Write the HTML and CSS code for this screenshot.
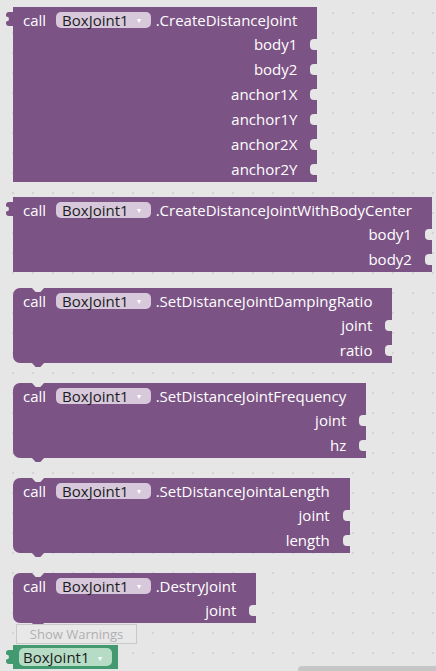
FILE: index.html
```html
<!DOCTYPE html>
<html>
<head>
<meta charset="utf-8">
<link rel="stylesheet" href="styles.css">
</head>
<body>
<div class="ws">
  <div class="blk out b1">
    <div class="hdr"><span class="kw">call</span><span class="pill">BoxJoint1<span class="arr">▾</span></span><span class="meth">.CreateDistanceJoint</span></div>
    <div class="row">body1</div>
    <div class="row">body2</div>
    <div class="row">anchor1X</div>
    <div class="row">anchor1Y</div>
    <div class="row">anchor2X</div>
    <div class="row">anchor2Y</div>
  </div>
  <div class="blk out b2">
    <div class="hdr"><span class="kw">call</span><span class="pill">BoxJoint1<span class="arr">▾</span></span><span class="meth">.CreateDistanceJointWithBodyCenter</span></div>
    <div class="row">body1</div>
    <div class="row">body2</div>
  </div>
  <div class="blk stmt b3">
    <div class="hdr"><span class="kw">call</span><span class="pill">BoxJoint1<span class="arr">▾</span></span><span class="meth">.SetDistanceJointDampingRatio</span></div>
    <div class="row">joint</div>
    <div class="row">ratio</div>
  </div>
  <div class="blk stmt b4">
    <div class="hdr"><span class="kw">call</span><span class="pill">BoxJoint1<span class="arr">▾</span></span><span class="meth">.SetDistanceJointFrequency</span></div>
    <div class="row">joint</div>
    <div class="row">hz</div>
  </div>
  <div class="blk stmt b5">
    <div class="hdr"><span class="kw">call</span><span class="pill">BoxJoint1<span class="arr">▾</span></span><span class="meth">.SetDistanceJointaLength</span></div>
    <div class="row">joint</div>
    <div class="row">length</div>
  </div>
  <div class="blk stmt b6">
    <div class="hdr"><span class="kw">call</span><span class="pill">BoxJoint1<span class="arr">▾</span></span><span class="meth">.DestryJoint</span></div>
    <div class="row">joint</div>
  </div>
  <button class="warn">Show Warnings</button>
  <div class="gblk"><span class="gpill">BoxJoint1<span class="arr">▾</span></span></div>
  <div class="scroll"></div>
</div>
</body>
</html>
```
FILE: styles.css
```css
html, body {
  margin: 0;
  padding: 0;
}
body {
  width: 436px;
  height: 671px;
  overflow: hidden;
  font-family: "Open Sans", "Noto Sans", sans-serif;
}
.ws {
  position: relative;
  width: 436px;
  height: 671px;
  background-color: #e6e6e6;
  background-image: radial-gradient(circle, #d4d4d4 0.8px, transparent 1.2px);
  background-size: 20px 20px;
  background-position: 3px 3px;
  overflow: hidden;
}
.blk {
  position: absolute;
  left: 13px;
  background: #7c5385;
  color: #fff;
  font-size: 15px;
  display: flex;
  flex-direction: column;
  width: max-content;
}
.b1 { top: 7px; }
.b2 { top: 197px; }
.b3 { top: 288px; }
.b4 { top: 383px; }
.b5 { top: 478px; }
.b6 { top: 573px; }
.hdr {
  height: 25px;
  display: flex;
  align-items: center;
  padding: 0 20px 0 10px;
  white-space: nowrap;
}
.kw {
  margin-right: 10px;
}
.pill {
  display: inline-flex;
  align-items: center;
  height: 16px;
  padding: 0 10px 0 6px;
  border-radius: 5px;
  background: #d7c8db;
  color: #1c1c1c;
  margin-right: 5px;
}
.arr {
  font-size: 8px;
  color: #fff;
  margin-left: 8px;
}
.row {
  position: relative;
  height: 25px;
  line-height: 25px;
  text-align: right;
  padding-right: 20px;
}
.row::after {
  content: "";
  position: absolute;
  right: 0;
  top: 7px;
  width: 7px;
  height: 11px;
  background: #e6e6e6;
  border-radius: 4px 0 0 4px;
}
.out::before {
  content: "";
  position: absolute;
  left: -7px;
  top: 5px;
  width: 7px;
  height: 14px;
  background: #7c5385;
  border-radius: 3px 0 0 3px;
  clip-path: polygon(0 0, 100% 0, 100% 100%, 0 100%, 0 70%, 40% 60%, 40% 40%, 0 30%);
}
.stmt {
  border-radius: 7px 0 0 7px;
}
.stmt::before {
  content: "";
  position: absolute;
  left: 19px;
  top: 0;
  width: 12px;
  height: 4px;
  background: #e6e6e6;
  clip-path: polygon(0 0, 100% 0, 70% 100%, 30% 100%);
}
.stmt::after {
  content: "";
  position: absolute;
  left: 19px;
  bottom: -4px;
  width: 12px;
  height: 4px;
  background: #7c5385;
  clip-path: polygon(0 0, 100% 0, 70% 100%, 30% 100%);
}
.warn {
  position: absolute;
  left: 16px;
  top: 624px;
  width: 121px;
  height: 20px;
  padding: 0;
  border: 1px solid #c9c9c9;
  background: #e8e8e8;
  color: #b0b0b0;
  font-family: "Open Sans", "Noto Sans", sans-serif;
  font-size: 13px;
}
.gblk {
  position: absolute;
  left: 13px;
  top: 645px;
  width: 105px;
  height: 24px;
  background: #439970;
  display: flex;
  align-items: center;
  padding-left: 6px;
  box-sizing: border-box;
  font-size: 15px;
}
.gblk::before {
  content: "";
  position: absolute;
  left: -7px;
  top: 5px;
  width: 7px;
  height: 14px;
  background: #439970;
  border-radius: 3px 0 0 3px;
  clip-path: polygon(0 0, 100% 0, 100% 100%, 0 100%, 0 70%, 40% 60%, 40% 40%, 0 30%);
}
.gpill {
  display: inline-flex;
  align-items: center;
  height: 18px;
  padding: 0 8px 0 4px;
  border-radius: 5px;
  background: #b6dcc6;
  color: #1c1c1c;
  width: 93px;
  box-sizing: border-box;
}
.scroll {
  position: absolute;
  left: 298px;
  top: 666px;
  width: 140px;
  height: 8px;
  background: #c6c6c6;
  border-radius: 4px;
}
```
